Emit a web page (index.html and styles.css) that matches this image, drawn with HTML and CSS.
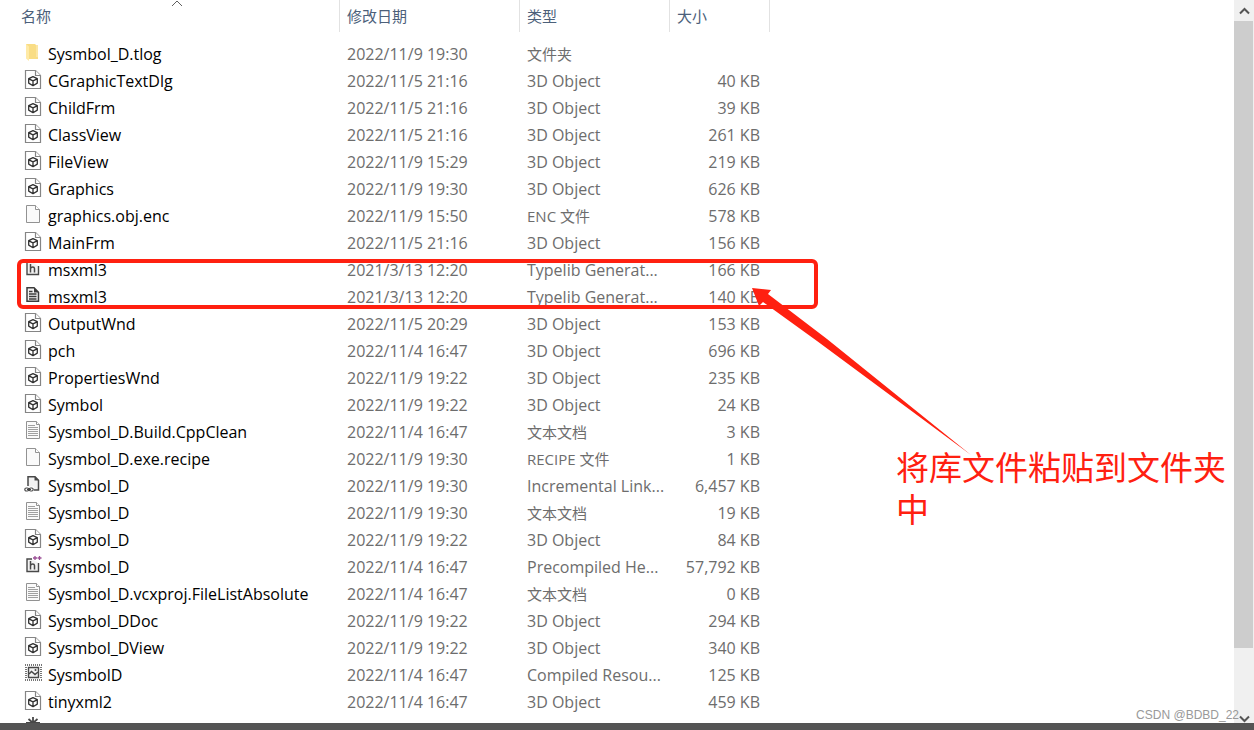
FILE: index.html
```html
<!DOCTYPE html>
<html lang="zh-CN">
<head>
<meta charset="utf-8">
<meta name="viewport" content="width=device-width, initial-scale=1">
<title>Sysmbol_D</title>
<link rel="stylesheet" href="styles.css">
</head>
<body>
<svg class="sprite" aria-hidden="true">
  <symbol id="folder" viewBox="0 0 20 22">
    <path d="M2 2h9l1 1v11l2 1v2H4z" fill="#f9dd85"/><path d="M12 3h2v12h-2z" fill="#fbe6a4"/><path d="M2 2l3 2.500V19l-3-2.500z" fill="#ffeaa6"/>
  </symbol>
  <symbol id="object" viewBox="0 0 20 22">
    <path d="M1.500 1.500h10l5 5v13h-15z" fill="#fff" stroke="#858585" stroke-width="1.200"/>
    <path d="M11.500 1.500v5h5" fill="#fff" stroke="#858585" stroke-width="1.200"/>
    <path d="M9 7.700l4.300 1.900v4.500L9 16.700l-4.300-2.600V9.600zM4.900 9.800L9 11.900l4.100-2.100M9 11.900v4.500" fill="none" stroke="#303030" stroke-width="1.300" stroke-linejoin="round"/>
  </symbol>
  <symbol id="blank" viewBox="0 0 20 22">
    <path d="M2.500 1.500h9l4 4v13h-13z" fill="#fafafa" stroke="#929292"/><path d="M11.500 1.500v4h4" fill="#fff" stroke="#929292"/>
  </symbol>
  <symbol id="text" viewBox="0 0 20 22">
    <path d="M2.500 1.500h10l3 3v14h-13z" fill="#fafafa" stroke="#929292"/><path d="M12.500 1.500v3h3" fill="#fff" stroke="#929292"/>
    <path d="M4 5.500h7M4 7.500h10M4 9.500h10M4 11.500h10M4 13.500h10M4 15.500h10" stroke="#a0a0a0"/>
  </symbol>
  <symbol id="header" viewBox="0 0 20 22">
    <path d="M8 4H3v12.500h11.500V8" fill="#f2f2f2"/>
    <path d="M8 4H3v12.500h11.500V8" fill="none" stroke="#484848" stroke-width="1.400"/>
    <path d="M6.500 6v8.500M6.500 10.500q.8-1.500 2.300-1.500t1.700 1.500v4" fill="none" stroke="#484848" stroke-width="1.500"/>
    <path d="M9 3h4M11 1v4M13.500 3h4M15.500 1v4" stroke="#9b4f96" stroke-width="1.300"/>
  </symbol>
  <symbol id="idl" viewBox="0 0 20 22">
    <path d="M3 2.800h7l4.500 4.500v9H3z" fill="#f2f2f2" stroke="#3c3c3c" stroke-width="1.500"/><path d="M10 2.500v5h4.500z" fill="#3c3c3c"/>
    <path d="M5 6.500h3.500M5 9h7.500M5 11.500h7.500M5 14h7.500" stroke="#3c3c3c" stroke-width="1.300"/>
  </symbol>
  <symbol id="link" viewBox="0 0 20 22">
    <path d="M4 12V2.800h7l3.500 3.500v9.700H4z" fill="#f2f2f2"/>
    <path d="M4 12V2.800h7l3.500 3.500v9.700H10" fill="none" stroke="#484848" stroke-width="1.500"/><path d="M10.500 2v4.500H15z" fill="#484848"/>
    <path d="M0 12.500h10v5H0z" fill="#fff"/>
    <rect x=".8" y="14" width="4" height="3" rx="1.500" fill="none" stroke="#484848" stroke-width="1.200"/>
    <rect x="5.200" y="14" width="4" height="3" rx="1.500" fill="none" stroke="#484848" stroke-width="1.200"/>
    <path d="M3 15.500h4" stroke="#484848" stroke-width="1.200"/>
  </symbol>
  <symbol id="resource" viewBox="0 0 20 22">
    <path d="M1 2h17M1 17h17" stroke="#484848" stroke-width="1.500" stroke-dasharray="1 1"/>
    <path d="M2 4v12M17 4v12" stroke="#484848" stroke-width="1.500" stroke-dasharray="1 1"/>
    <path d="M4.500 4.500h10v10h-10z" fill="#f2f2f2" stroke="#484848" stroke-width="1.400"/>
    <path d="M5 11l2.500-2.500 3.500 3 3-2.500" fill="none" stroke="#484848" stroke-width="1.500"/><circle cx="11.500" cy="7" r="1" fill="#484848"/>
  </symbol>
  <symbol id="gear" viewBox="0 0 20 22">
    <path d="M9 0v12M4.500 2l9 8M13.500 2l-9 8M2 6h14" stroke="#484848" stroke-width="1.800"/>
  </symbol>
</svg>

<div class="window">
  <main class="pane">
    <div class="files">
      <table class="list">
        <colgroup><col class="col-name"><col class="col-date"><col class="col-type"><col class="col-size"></colgroup>
        <thead>
          <tr><th scope="col" aria-sort="ascending">名称<svg class="sort" viewBox="0 0 12 7" aria-hidden="true"><path d="M1 6l5-5 5 5"/></svg></th><th scope="col">修改日期</th><th scope="col">类型</th><th scope="col">大小</th></tr>
        </thead>
        <tbody>
          <tr><td><svg class="icon"><use href="#folder"/></svg>Sysmbol_D.tlog</td><td>2022/11/9 19:30</td><td class="cjk">文件夹</td><td></td></tr>
          <tr><td><svg class="icon"><use href="#object"/></svg>CGraphicTextDlg</td><td>2022/11/5 21:16</td><td>3D Object</td><td>40 KB</td></tr>
          <tr><td><svg class="icon"><use href="#object"/></svg>ChildFrm</td><td>2022/11/5 21:16</td><td>3D Object</td><td>39 KB</td></tr>
          <tr><td><svg class="icon"><use href="#object"/></svg>ClassView</td><td>2022/11/5 21:16</td><td>3D Object</td><td>261 KB</td></tr>
          <tr><td><svg class="icon"><use href="#object"/></svg>FileView</td><td>2022/11/9 15:29</td><td>3D Object</td><td>219 KB</td></tr>
          <tr><td><svg class="icon"><use href="#object"/></svg>Graphics</td><td>2022/11/9 19:30</td><td>3D Object</td><td>626 KB</td></tr>
          <tr><td><svg class="icon"><use href="#blank"/></svg>graphics.obj.enc</td><td>2022/11/9 15:50</td><td class="cjk">ENC 文件</td><td>578 KB</td></tr>
          <tr><td><svg class="icon"><use href="#object"/></svg>MainFrm</td><td>2022/11/5 21:16</td><td>3D Object</td><td>156 KB</td></tr>
          <tr><td><svg class="icon"><use href="#header"/></svg>msxml3</td><td>2021/3/13 12:20</td><td>Typelib Generat...</td><td>166 KB</td></tr>
          <tr><td><svg class="icon"><use href="#idl"/></svg>msxml3</td><td>2021/3/13 12:20</td><td>Typelib Generat...</td><td>140 KB</td></tr>
          <tr><td><svg class="icon"><use href="#object"/></svg>OutputWnd</td><td>2022/11/5 20:29</td><td>3D Object</td><td>153 KB</td></tr>
          <tr><td><svg class="icon"><use href="#object"/></svg>pch</td><td>2022/11/4 16:47</td><td>3D Object</td><td>696 KB</td></tr>
          <tr><td><svg class="icon"><use href="#object"/></svg>PropertiesWnd</td><td>2022/11/9 19:22</td><td>3D Object</td><td>235 KB</td></tr>
          <tr><td><svg class="icon"><use href="#object"/></svg>Symbol</td><td>2022/11/9 19:22</td><td>3D Object</td><td>24 KB</td></tr>
          <tr><td><svg class="icon"><use href="#text"/></svg>Sysmbol_D.Build.CppClean</td><td>2022/11/4 16:47</td><td class="cjk">文本文档</td><td>3 KB</td></tr>
          <tr><td><svg class="icon"><use href="#blank"/></svg>Sysmbol_D.exe.recipe</td><td>2022/11/9 19:30</td><td class="cjk">RECIPE 文件</td><td>1 KB</td></tr>
          <tr><td><svg class="icon"><use href="#link"/></svg>Sysmbol_D</td><td>2022/11/9 19:30</td><td>Incremental Link...</td><td>6,457 KB</td></tr>
          <tr><td><svg class="icon"><use href="#text"/></svg>Sysmbol_D</td><td>2022/11/9 19:30</td><td class="cjk">文本文档</td><td>19 KB</td></tr>
          <tr><td><svg class="icon"><use href="#object"/></svg>Sysmbol_D</td><td>2022/11/9 19:22</td><td>3D Object</td><td>84 KB</td></tr>
          <tr><td><svg class="icon"><use href="#header"/></svg>Sysmbol_D</td><td>2022/11/4 16:47</td><td>Precompiled He...</td><td>57,792 KB</td></tr>
          <tr><td><svg class="icon"><use href="#text"/></svg>Sysmbol_D.vcxproj.FileListAbsolute</td><td>2022/11/4 16:47</td><td class="cjk">文本文档</td><td>0 KB</td></tr>
          <tr><td><svg class="icon"><use href="#object"/></svg>Sysmbol_DDoc</td><td>2022/11/9 19:22</td><td>3D Object</td><td>294 KB</td></tr>
          <tr><td><svg class="icon"><use href="#object"/></svg>Sysmbol_DView</td><td>2022/11/9 19:22</td><td>3D Object</td><td>340 KB</td></tr>
          <tr><td><svg class="icon"><use href="#resource"/></svg>SysmbolD</td><td>2022/11/4 16:47</td><td>Compiled Resou...</td><td>125 KB</td></tr>
          <tr><td><svg class="icon"><use href="#object"/></svg>tinyxml2</td><td>2022/11/4 16:47</td><td>3D Object</td><td>459 KB</td></tr>
          <tr><td><svg class="icon"><use href="#gear"/></svg></td><td></td><td></td><td></td></tr>
        </tbody>
      </table>
    </div>
    <div class="scrollbar">
      <button class="step" type="button" aria-label="向上滚动"><svg viewBox="0 0 11 8"><path d="M1 6.500l4.500-4.500L10 6.500"/></svg></button>
      <div class="track"><div class="thumb"></div></div>
      <button class="step step-down" type="button" aria-label="向下滚动"><svg viewBox="0 0 11 8"><path d="M1 1.500L5.500 6 10 1.500"/></svg></button>
    </div>
  </main>
  <footer class="edge"></footer>
  <div class="highlight"></div>
  <svg class="arrow" viewBox="0 0 220 168" aria-hidden="true"><path d="M1 0L20 2 17 6 76 51 220 167 66 53 12 14 8 18z"/></svg>
  <p class="note">将库文件粘贴到文件夹中</p>
  <span class="watermark">CSDN @BDBD_22</span>
</div>
</body>
</html>
```
FILE: styles.css
```css
* { box-sizing: border-box; }
body {
  margin: 0;
  background: #fff;
  color: #000;
  font: 16px/27px "Open Sans", "Noto Sans CJK SC", sans-serif;
}
.sprite { position: absolute; width: 0; height: 0; }
.window {
  position: relative;
  display: flex;
  flex-direction: column;
  height: 100vh;
  overflow: hidden;
}
.pane { display: flex; flex: 1; min-height: 0; }
.files { flex: 1; min-width: 0; overflow: hidden; }

.list { width: 770px; table-layout: fixed; border-collapse: separate; border-spacing: 0; }
.col-name { width: 340px; }
.col-date { width: 180px; }
.col-type { width: 150px; }
.col-size { width: 100px; }
.list th {
  position: relative;
  height: 32px;
  padding: 0 7px;
  border-right: 1px solid #e2e2e2;
  color: #4c607a;
  font-size: 15px;
  font-weight: 400;
  line-height: 32px;
  text-align: left;
}
.list th:first-child { padding-left: 21px; }
.sort {
  position: absolute;
  top: 0;
  left: 171px;
  width: 12px;
  height: 7px;
  fill: none;
  stroke: #606060;
}
.list tbody::before { content: ""; display: block; height: 9px; }
.list td {
  height: 27px;
  padding: 0 7px;
  color: #6d6d6d;
  white-space: nowrap;
}
.list td:first-child { padding-left: 24px; color: #000; }
.list td:last-child { padding-right: 10px; text-align: right; }
.list .cjk { font-size: 15px; }
.icon { width: 20px; height: 22px; margin: 1px 4px 0 0; vertical-align: top; }

.scrollbar { display: flex; flex-direction: column; width: 20px; background: #f0f0f0; }
.step {
  display: flex;
  justify-content: center;
  align-items: center;
  height: 21px;
  padding: 0;
  border: 0;
  background: none;
}
.step svg { width: 11px; height: 8px; fill: none; stroke: #555; stroke-width: 2; }
.step-down { align-items: flex-end; }
.track { flex: 1; }
.thumb { height: 92%; margin-right: 1px; background: #cdcdcd; }
.edge { height: 7px; background: #545454; }

.highlight {
  position: absolute;
  top: 259px;
  left: 17px;
  width: 801px;
  height: 50px;
  border: 4px solid #ff2010;
  border-radius: 6px;
}
.arrow { position: absolute; top: 288px; left: 751px; width: 220px; height: 168px; fill: #ff2010; }
.note {
  position: absolute;
  top: 447px;
  left: 896px;
  width: 336px;
  margin: 0;
  color: #ff2010;
  font-size: 33px;
  line-height: 42px;
}
.watermark {
  position: absolute;
  right: 15px;
  bottom: 6px;
  color: #999;
  font: 12px/18px "Liberation Sans", sans-serif;
}
```
